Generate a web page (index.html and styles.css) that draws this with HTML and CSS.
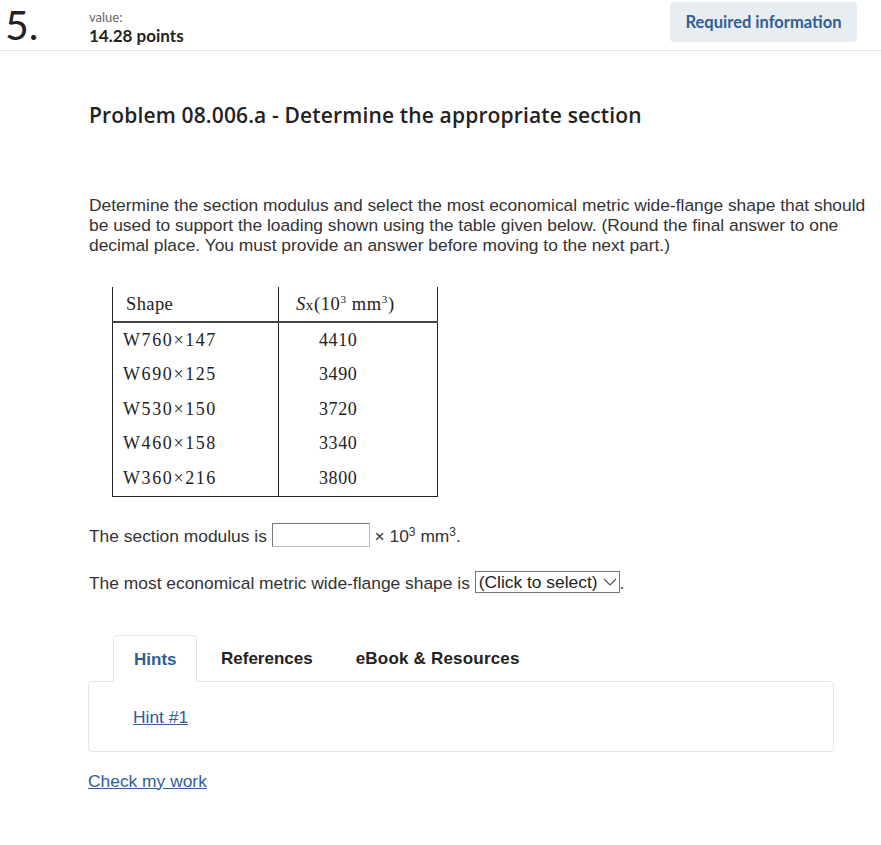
FILE: index.html
```html
<!DOCTYPE html>
<html>
<head>
<meta charset="utf-8">
<link rel="stylesheet" href="styles.css">
</head>
<body>
<header class="qhead">
  <div class="qnum">5.</div>
  <div class="qvalue">
    <div class="vlabel">value:</div>
    <div class="vpoints">14.28 points</div>
  </div>
  <div class="reqinfo">Required information</div>
</header>
<main class="content">
  <h1 class="title">Problem 08.006.a - Determine the appropriate section</h1>
  <p class="prompt">Determine the section modulus and select the most economical metric wide-flange shape that should be used to support the loading shown using the table given below. (Round the final answer to one decimal place. You must provide an answer before moving to the next part.)</p>
  <table class="shapes">
    <thead>
      <tr><th class="c1">Shape</th><th class="c2"><i>S</i><span class="sub">x</span>(10<sup>3</sup> mm<sup>3</sup>)</th></tr>
    </thead>
    <tbody>
      <tr><td class="c1">W760×147</td><td class="c2">4410</td></tr>
      <tr><td class="c1">W690×125</td><td class="c2">3490</td></tr>
      <tr><td class="c1">W530×150</td><td class="c2">3720</td></tr>
      <tr><td class="c1">W460×158</td><td class="c2">3340</td></tr>
      <tr><td class="c1">W360×216</td><td class="c2">3800</td></tr>
    </tbody>
  </table>
  <div class="answer a1">The section modulus is <span class="inbox"></span> × 10<sup>3</sup> mm<sup>3</sup>.</div>
  <div class="answer a2">The most economical metric wide-flange shape is <span class="selbox">(Click to select) <svg class="chev" width="14" height="10" viewBox="0 0 14 10"><path d="M1 2 L7 8 L13 2" fill="none" stroke="#555" stroke-width="1.2"/></svg></span>.</div>
  <div class="tabs">
    <div class="tab active">Hints</div>
    <div class="tab">References</div>
    <div class="tab">eBook &amp; Resources</div>
  </div>
  <div class="panel"><a class="link" href="#">Hint #1</a></div>
  <a class="link check" href="#">Check my work</a>
</main>
</body>
</html>
```

FILE: styles.css
```css
html, body { margin: 0; padding: 0; background: #fff; }
body { font-family: "Liberation Sans", Arial, sans-serif; color: #333; }

.qhead {
  display: flex;
  align-items: flex-start;
  height: 51px;
  border-bottom: 1px solid #e6e6e6;
  box-sizing: border-box;
}
.qnum {
  font-family: Lato, sans-serif;
  font-weight: 400;
  font-size: 41px;
  line-height: 49px;
  color: #222;
  padding-left: 5px;
  width: 84px;
}
.qvalue { font-family: Lato, sans-serif; padding-top: 10px; }
.vlabel { font-size: 13px; line-height: 14px; color: #666; }
.vpoints { font-size: 17px; line-height: 20px; font-weight: 700; color: #222; margin-top: 2px; }
.reqinfo {
  margin-left: auto;
  margin-right: 24px;
  margin-top: 2px;
  width: 187px;
  height: 40px;
  box-sizing: border-box;
  background: #e8edf2;
  border-radius: 4px;
  font-family: Lato, sans-serif;
  font-weight: 700;
  font-size: 16.5px;
  color: #2f5d96;
  display: flex;
  align-items: center;
  justify-content: center;
}

.content { padding-left: 88px; }
.title {
  font-family: "Open Sans", sans-serif;
  font-weight: 600;
  font-size: 21px;
  letter-spacing: 0.15px;
  line-height: 26px;
  color: #222;
  margin: 51px 0 0 1px;
}
.prompt {
  margin: 67px 0 0 1px;
  width: 790px;
  font-size: 17.4px;
  line-height: 20px;
  color: #333;
}

.shapes {
  margin: 32px 0 0 24px;
  border-collapse: collapse;
  font-family: "Liberation Serif", "Times New Roman", serif;
  font-size: 18px;
  color: #222;
  letter-spacing: 1.6px;
  border-left: 1px solid #222;
  border-right: 1px solid #222;
  border-bottom: 1px solid #222;
}
.shapes th, .shapes td { padding: 0; text-align: left; font-weight: 400; }
.shapes th { height: 34px; border-bottom: 2px solid #444; letter-spacing: 0.4px; font-size: 18.5px; }
.shapes td { height: 34.5px; }
.shapes .c1 { width: 152px; padding-left: 10px; border-right: 1px solid #222; }
.shapes th.c1 { padding-left: 13px; }
.shapes .c2 { width: 118px; padding-left: 40px; letter-spacing: 0.6px; }
.shapes th.c2 { padding-left: 17px; width: 141px; }
.shapes sup { font-size: 11px; vertical-align: 7px; line-height: 0; }
.shapes .sub { font-size: 15px; }

.answer { font-size: 17.4px; line-height: 24px; color: #333; margin-left: 1px; }
.answer sup { font-size: 12px; vertical-align: 6px; line-height: 0; }
.a1 { margin-top: 27px; }
.a2 { margin-top: 23px; }
.inbox {
  display: inline-block;
  width: 98px;
  height: 24px;
  box-sizing: border-box;
  border: 1px solid #bbb;
  border-top-color: #777;
  border-left-color: #777;
  vertical-align: middle;
  margin-top: -3px;
}
.selbox {
  display: inline-flex;
  align-items: center;
  height: 22px;
  box-sizing: border-box;
  border: 1px solid #767676;
  padding: 0 2px 0 3px;
  vertical-align: middle;
  margin-top: -3px;
  color: #222;
}
.chev { margin-left: 5px; }

.tabs { display: flex; margin-top: 40px; margin-left: 25px; }
.tab {
  font-weight: 700;
  font-size: 17px;
  color: #222;
  height: 46px;
  display: flex;
  align-items: center;
  padding: 2px 20px 0;
  box-sizing: border-box;
  border: 1px solid transparent;
  border-bottom: none;
  margin-right: 3px;
}
.tab.active {
  color: #2f5d96;
  border-color: #e6e6e6;
  border-radius: 4px 4px 0 0;
  background: #fff;
  position: relative;
  z-index: 1;
  margin-bottom: -1px;
  height: 47px;
  width: 84px;
}
.tabs .tab:nth-child(2) { margin-right: 1px; }
.tabs .tab:nth-child(3) { letter-spacing: 0.2px; }
.panel {
  width: 746px;
  height: 71px;
  box-sizing: border-box;
  border: 1px solid #e6e6e6;
  border-radius: 4px;
  padding: 24px 0 0 44px;
  line-height: 22px;
}
.link { color: #2f5d96; text-decoration: underline; font-size: 17.4px; }
.check { display: inline-block; margin-top: 19px; }
```
